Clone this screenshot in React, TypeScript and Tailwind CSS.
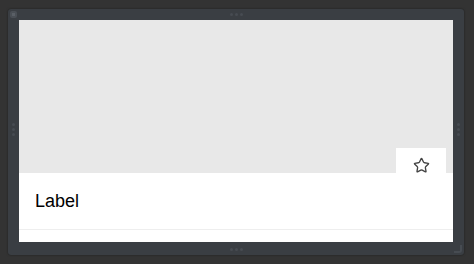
import { Star } from 'lucide-react';

const Dots = ({ vertical = false }: { vertical?: boolean }) => (
  <div className={`flex ${vertical ? 'flex-col' : 'flex-row'} gap-[2px]`}>
    <span className="h-[3px] w-[3px] rounded-full bg-[#474c52]" />
    <span className="h-[3px] w-[3px] rounded-full bg-[#474c52]" />
    <span className="h-[3px] w-[3px] rounded-full bg-[#474c52]" />
  </div>
);

export default function App() {
  return (
    <div
      className="h-[264px] w-[474px] overflow-hidden bg-[#333333] pl-[8px] pt-[9px]"
      style={{ fontFamily: '"Liberation Sans", Arial, sans-serif' }}
    >
      <div className="relative h-[246px] w-[456px] rounded-[3px] bg-[#3a3e43] pl-[11px] pt-[11px] shadow-[0_0_2px_rgba(0,0,0,0.5)]">
        {/* close handle */}
        <div className="absolute left-[2px] top-[2px] flex h-[7px] w-[7px] items-center justify-center rounded-[2px] bg-[#4a4f55]">
          <span className="h-[3px] w-[3px] bg-[#5a5f66]" />
        </div>
        {/* edge handles */}
        <div className="absolute left-[222px] top-[4px]"><Dots /></div>
        <div className="absolute left-[222px] bottom-[4px]"><Dots /></div>
        <div className="absolute left-[4px] top-[114px]"><Dots vertical /></div>
        <div className="absolute right-[4px] top-[114px]"><Dots vertical /></div>
        {/* resize grip */}
        <div className="absolute bottom-[2px] right-[2px] h-[8px] w-[8px] rounded-br-[3px] border-b-2 border-r-2 border-[#474c52]" />

        <div className="flex h-[222px] w-[434px] flex-col bg-white">
          <div className="relative h-[153px] bg-[#e8e8e8]">
            <div className="absolute bottom-0 right-[7px] flex h-[25px] w-[50px] items-center justify-center bg-white">
              <Star size={17} strokeWidth={1.9} className="mt-[10px] text-[#444444]" />
            </div>
          </div>
          <div className="flex h-[56px] items-center pl-[16px] pt-[1px] text-[18px] text-black">Label</div>
          <div className="h-px bg-[#eeeeee]" />
        </div>
      </div>
    </div>
  );
}
